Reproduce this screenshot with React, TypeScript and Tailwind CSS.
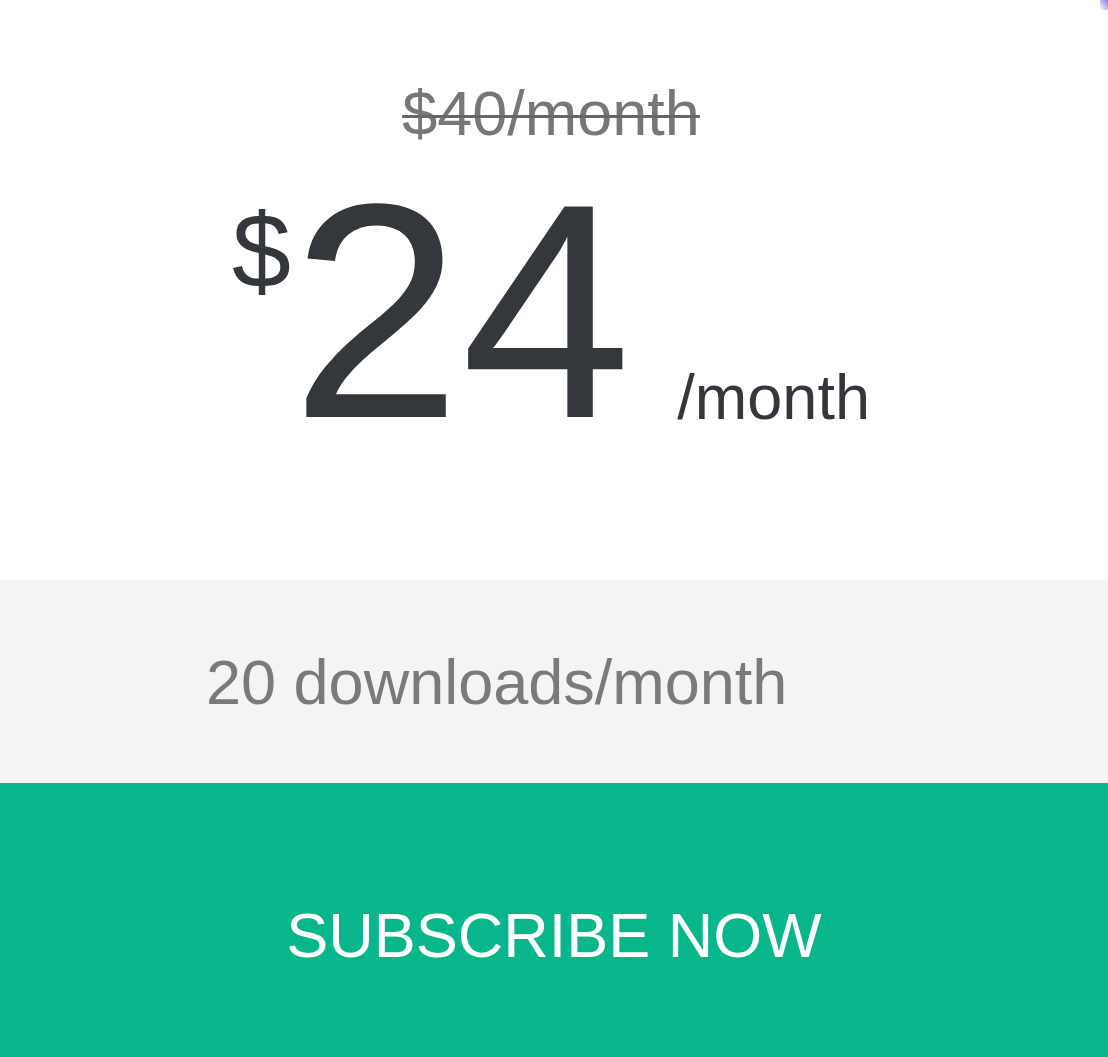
export default function App() {
  return (
    <div className="relative flex min-h-[1057px] w-full flex-col overflow-hidden bg-white font-['Liberation_Sans',Arial,sans-serif]">
      {/* corner bleed from neighbouring card */}
      <div className="absolute right-0 top-0 h-[10px] w-[8px] bg-gradient-to-bl from-[#8a7fd6] to-transparent" />

      {/* Price header */}
      <div className="flex h-[580px] flex-col">
        <p className="mr-[6px] mt-[77px] text-center text-[63px] leading-[72px] text-[#777] line-through decoration-[#666] decoration-[3px]">
          $40/month
        </p>
        <div className="ml-[232px] mt-[9px] flex items-start">
          <span className="mt-[40px] text-[106px] leading-[106px] text-[#34373c]">$</span>
          <span className="text-[306px] leading-[306px] text-[#34373c]">24</span>
          <span className="ml-[46px] mt-[203px] text-[63px] leading-[72px] text-[#34373c]">/month</span>
        </div>
      </div>

      {/* Feature row */}
      <div className="flex h-[203px] items-center bg-[#f3f4f6] pl-[206px]">
        <span className="text-[63px] leading-[72px] text-[#7a7a7a]">20 downloads/month</span>
      </div>

      {/* CTA */}
      <button className="flex h-[300px] justify-center bg-[#07b68a] pt-[116px] text-[63px] leading-[72px] text-white">
        SUBSCRIBE NOW
      </button>
    </div>
  )
}
